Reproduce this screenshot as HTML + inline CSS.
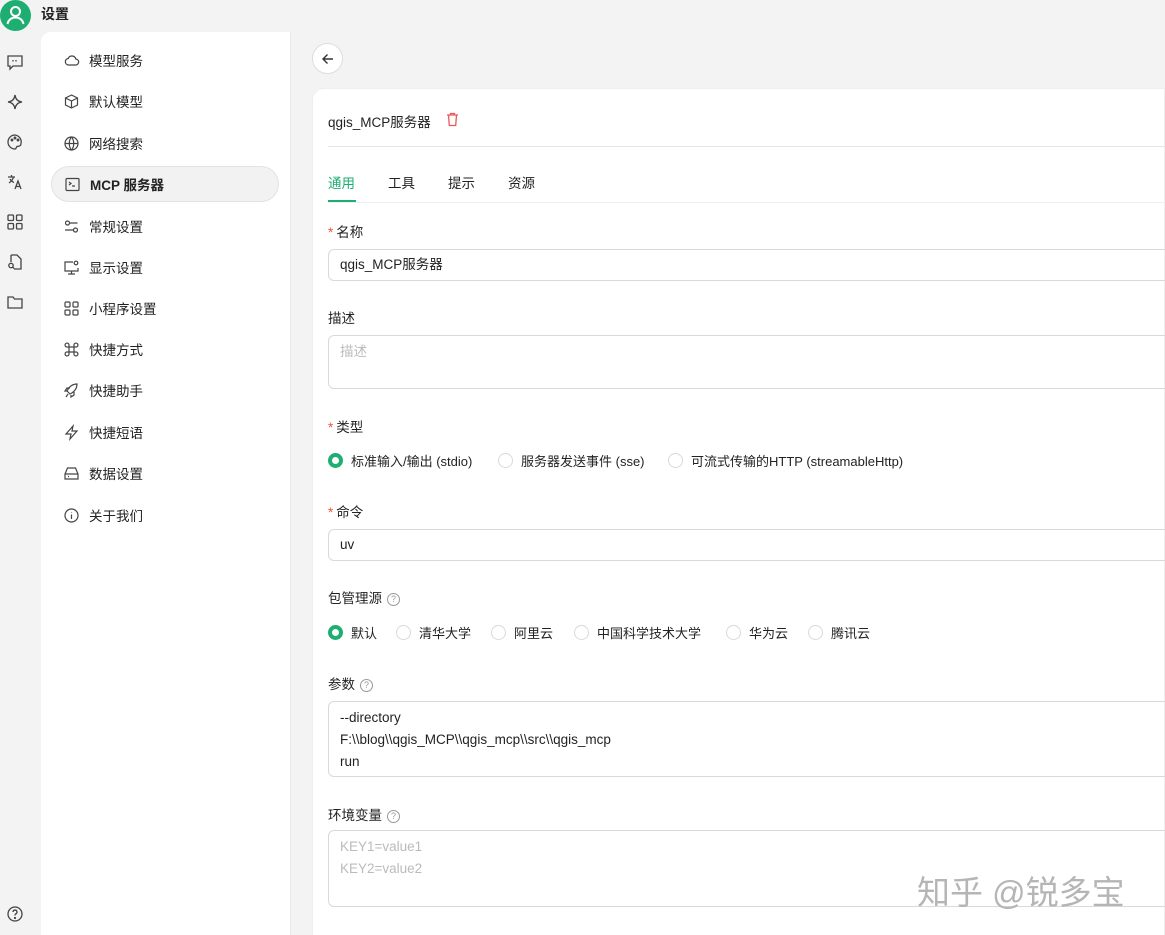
<!DOCTYPE html>
<html><head><meta charset="utf-8"><style>
*{box-sizing:border-box;margin:0;padding:0}
html{width:1165px;height:935px;overflow:hidden}
body{width:1165px;height:935px;overflow:hidden;background:#f3f3f3;font-family:"Liberation Sans","Noto Sans CJK SC",sans-serif;font-size:13.5px;color:#222;position:relative}
.abs{position:absolute}
.avatar{left:0;top:0;width:31px;height:31px;border-radius:50%;background:#1fae72}
.title{left:41px;top:4px;font-weight:bold;font-size:14px}
.rail svg{position:absolute;left:6px}
.side{left:41px;top:32px;width:250px;height:903px;background:#fff;border-top-left-radius:10px;border-right:1px solid #e8e8e8}
.item{position:absolute;left:10px;width:228px;height:36px;display:flex;align-items:center;padding-left:12px;font-size:13.5px}
.item svg{margin-right:9px}
.item.act{background:#f2f2f2;border:1px solid #e2e2e2;border-radius:18px;font-weight:bold}
.back{left:312px;top:43px;width:31px;height:31px;border-radius:50%;background:#fff;border:1px solid #ddd;display:flex;align-items:center;justify-content:center}
.card{left:312px;top:88px;width:853px;height:847px;background:#fff;border-radius:12px 0 0 0;border:1px solid #eee;border-bottom:none}
.lbl{position:absolute;left:328px;font-size:13.5px}
.req{color:#e54;margin-right:3px}
.inp{position:absolute;left:328px;width:850px;border:1px solid #d9d9d9;border-radius:6px;padding:6px 11px;font-size:13.5px;line-height:22px}
.ph{color:#bbb}
.radio{position:absolute;display:flex;align-items:center;font-size:13px}
.r{width:15px;height:15px;border-radius:50%;border:1px solid #d9d9d9;margin-right:8px;display:inline-block}
.r.on{border:4.5px solid #1fae72}
.q{display:inline-block;width:13px;height:13px;border:1px solid #999;border-radius:50%;font-size:9px;text-align:center;line-height:11px;color:#999;margin-left:5px;vertical-align:1px}
</style></head><body>
<div class="abs avatar"><svg width="31" height="31" viewBox="0 0 31 31"><circle cx="15.5" cy="11.5" r="4.5" fill="none" stroke="#fff" stroke-width="2"/><path d="M7.5 24c1-5 5-6.5 8-6.5s7 1.5 8 6.5" fill="none" stroke="#fff" stroke-width="2"/></svg></div>
<div class="abs title">设置</div>
<div class="abs rail" style="left:0;top:0;width:40px;height:935px">
<svg style="top:53px" width="18" height="18" viewBox="0 0 18 18" fill="none" stroke="#444" stroke-width="1.3"><path d="M2 3h14v10H7l-3 3v-3H2z"/><path d="M7 7v1.5M10 7v1.5"/></svg>
<svg style="top:93px" width="18" height="18" viewBox="0 0 18 18" fill="none" stroke="#444" stroke-width="1.3"><path d="M9 2c.5 4 2.5 6.5 7 7-4.5.5-6.5 3-7 7-.5-4-2.5-6.5-7-7 4.5-.5 6.5-3 7-7z"/></svg>
<svg style="top:133px" width="18" height="18" viewBox="0 0 18 18" fill="none" stroke="#444" stroke-width="1.3"><path d="M9 2a7 7 0 1 0 0 14c1.5 0 1-2 2-2.5s4 .5 4-3A7 7 0 0 0 9 2z"/><circle cx="6" cy="7" r=".8"/><circle cx="9" cy="5" r=".8"/><circle cx="12" cy="7" r=".8"/></svg>
<svg style="top:173px" width="18" height="18" viewBox="0 0 18 18" fill="none" stroke="#444" stroke-width="1.3"><path d="M2 4h7M5.5 2v2M3 10c3-2 4-4 4.5-6M4 6c1 2 3 3 4 3.5M9 16l3-8 3 8M10 13.5h4"/></svg>
<svg style="top:213px" width="18" height="18" viewBox="0 0 18 18" fill="none" stroke="#444" stroke-width="1.3"><rect x="2" y="2" width="5.5" height="5.5" rx="1"/><rect x="10.5" y="2" width="5.5" height="5.5" rx="1"/><rect x="2" y="10.5" width="5.5" height="5.5" rx="1"/><rect x="10.5" y="10.5" width="5.5" height="5.5" rx="1"/></svg>
<svg style="top:253px" width="18" height="18" viewBox="0 0 18 18" fill="none" stroke="#444" stroke-width="1.3"><path d="M5 2h6l4 4v10H8M5 2v7"/><circle cx="5" cy="12.5" r="2.2"/><path d="M6.6 14l1.5 1.5"/></svg>
<svg style="top:293px" width="18" height="18" viewBox="0 0 18 18" fill="none" stroke="#444" stroke-width="1.3"><path d="M2 4h5l1.5 2H16v9H2z"/></svg>
<svg style="top:905px" width="18" height="18" viewBox="0 0 18 18" fill="none" stroke="#444" stroke-width="1.3"><circle cx="9" cy="9" r="7"/><path d="M7 7a2 2 0 1 1 2.5 2c-.5.2-.5.7-.5 1.5"/><circle cx="9" cy="13" r=".5"/></svg>
</div>
<div class="abs side">
<div class="item" style="top:10px"><svg width="17" height="17" viewBox="0 0 17 17" fill="none" stroke="#444" stroke-width="1.2"><path d="M5 13h7.5a3 3 0 0 0 .3-6 4 4 0 0 0-7.6-.5A3.3 3.3 0 0 0 5 13z"/></svg>模型服务</div>
<div class="item" style="top:51px"><svg width="17" height="17" viewBox="0 0 17 17" fill="none" stroke="#444" stroke-width="1.2"><path d="M8.5 2l6 3v7l-6 3-6-3V5zM2.5 5l6 3 6-3M8.5 8v7"/></svg>默认模型</div>
<div class="item" style="top:93px"><svg width="17" height="17" viewBox="0 0 17 17" fill="none" stroke="#444" stroke-width="1.2"><circle cx="8.5" cy="8.5" r="6.5"/><path d="M2 8.5h13M8.5 2c-3 3.5-3 9.5 0 13M8.5 2c3 3.5 3 9.5 0 13"/></svg>网络搜索</div>
<div class="item act" style="top:134px"><svg width="17" height="17" viewBox="0 0 17 17" fill="none" stroke="#444" stroke-width="1.2"><rect x="2" y="2.5" width="13" height="12" rx="1"/><path d="M5 6l2 1.5-2 1.5M8 10h3"/></svg>MCP 服务器</div>
<div class="item" style="top:176px"><svg width="17" height="17" viewBox="0 0 17 17" fill="none" stroke="#444" stroke-width="1.2"><circle cx="4.5" cy="5" r="2"/><circle cx="12.5" cy="12" r="2"/><path d="M6.5 5h8M2 12h8.5"/></svg>常规设置</div>
<div class="item" style="top:217px"><svg width="17" height="17" viewBox="0 0 17 17" fill="none" stroke="#444" stroke-width="1.2"><path d="M10 3H2v9h13V9M8.5 12v3M5 15h7"/><circle cx="13" cy="4" r="1.8"/></svg>显示设置</div>
<div class="item" style="top:258px"><svg width="17" height="17" viewBox="0 0 17 17" fill="none" stroke="#444" stroke-width="1.2"><rect x="2" y="2" width="5" height="5" rx="1"/><rect x="10" y="2" width="5" height="5" rx="1"/><rect x="2" y="10" width="5" height="5" rx="1"/><rect x="10" y="10" width="5" height="5" rx="1"/></svg>小程序设置</div>
<div class="item" style="top:299px"><svg width="17" height="17" viewBox="0 0 17 17" fill="none" stroke="#444" stroke-width="1.2"><path d="M6 6h5v5H6zM6 6V4.5a2 2 0 1 0-1.5 1.5zM11 6V4.5a2 2 0 1 1 1.5 1.5zM6 11v1.5a2 2 0 1 1-1.5-1.5zM11 11v1.5a2 2 0 1 0 1.5-1.5z"/></svg>快捷方式</div>
<div class="item" style="top:340px"><svg width="17" height="17" viewBox="0 0 17 17" fill="none" stroke="#444" stroke-width="1.2"><path d="M6 11l-2-2c2-4 5-7 10-7 0 5-3 8-7 10zM5 12l-2 3M4 9H2l2-3h3M8 13v2l3-2v-3"/></svg>快捷助手</div>
<div class="item" style="top:382px"><svg width="17" height="17" viewBox="0 0 17 17" fill="none" stroke="#444" stroke-width="1.2"><path d="M10 2L3 10h5l-1 5 7-8H9z"/></svg>快捷短语</div>
<div class="item" style="top:423px"><svg width="17" height="17" viewBox="0 0 17 17" fill="none" stroke="#444" stroke-width="1.2"><path d="M2 9l2.5-6h8L15 9v5H2zM2 9h13M5 11.5h1"/></svg>数据设置</div>
<div class="item" style="top:465px"><svg width="17" height="17" viewBox="0 0 17 17" fill="none" stroke="#444" stroke-width="1.2"><circle cx="8.5" cy="8.5" r="6.5"/><path d="M8.5 7.5v4.5M8.5 5v.5"/></svg>关于我们</div>
</div>
<div class="abs back"><svg width="14" height="14" viewBox="0 0 14 14" fill="none" stroke="#333" stroke-width="1.4"><path d="M12 7H2M6.5 2.5L2 7l4.5 4.5"/></svg></div>
<div class="abs card"></div>
<div class="abs" style="left:328px;top:111px;font-size:13.5px">qgis_MCP服务器</div>
<svg class="abs" style="left:446px;top:112px" width="13" height="15" viewBox="0 0 13 15" fill="none" stroke="#e55" stroke-width="1.3"><path d="M1 3h11M4.5 3V1.5h4V3M2.5 3l.8 10.5h6.4L10.5 3"/></svg>
<div class="abs" style="left:328px;top:146px;width:840px;height:1px;background:#e6e6e6"></div>
<div class="abs" style="left:328px;top:172px;color:#1fae72">通用</div>
<div class="abs" style="left:388px;top:172px">工具</div>
<div class="abs" style="left:448px;top:172px">提示</div>
<div class="abs" style="left:508px;top:172px">资源</div>
<div class="abs" style="left:328px;top:202px;width:840px;height:1px;background:#eee"></div>
<div class="abs" style="left:328px;top:200px;width:28px;height:2px;background:#1fae72"></div>
<div class="lbl" style="top:221px"><span class="req">*</span>名称</div>
<div class="inp" style="top:249px;height:32px;padding-top:4px">qgis_MCP服务器</div>
<div class="lbl" style="top:307px">描述</div>
<div class="inp ph" style="top:335px;height:54px;padding-top:5px">描述</div>
<div class="lbl" style="top:416px"><span class="req">*</span>类型</div>
<div class="radio" style="left:328px;top:451px"><span class="r on"></span>标准输入/输出 (stdio)</div>
<div class="radio" style="left:498px;top:451px"><span class="r"></span>服务器发送事件 (sse)</div>
<div class="radio" style="left:668px;top:451px"><span class="r"></span>可流式传输的HTTP (streamableHttp)</div>
<div class="lbl" style="top:501px"><span class="req">*</span>命令</div>
<div class="inp" style="top:529px;height:32px;padding-top:4px">uv</div>
<div class="lbl" style="top:587px">包管理源<span class="q">?</span></div>
<div class="radio" style="left:328px;top:623px"><span class="r on"></span>默认</div>
<div class="radio" style="left:396px;top:623px"><span class="r"></span>清华大学</div>
<div class="radio" style="left:491px;top:623px"><span class="r"></span>阿里云</div>
<div class="radio" style="left:574px;top:623px"><span class="r"></span>中国科学技术大学</div>
<div class="radio" style="left:726px;top:623px"><span class="r"></span>华为云</div>
<div class="radio" style="left:808px;top:623px"><span class="r"></span>腾讯云</div>
<div class="lbl" style="top:673px">参数<span class="q">?</span></div>
<div class="inp" style="top:701px;height:76px;padding-top:5px">--directory<br>F:\\blog\\qgis_MCP\\qgis_mcp\\src\\qgis_mcp<br>run</div>
<div class="lbl" style="top:804px">环境变量<span class="q">?</span></div>
<div class="inp ph" style="top:830px;height:77px;padding-top:5px">KEY1=value1<br>KEY2=value2</div>
<div class="abs" style="left:917px;top:866px;font-size:33px;color:#b5b5b5">知乎 @锐多宝</div>
</body></html>
